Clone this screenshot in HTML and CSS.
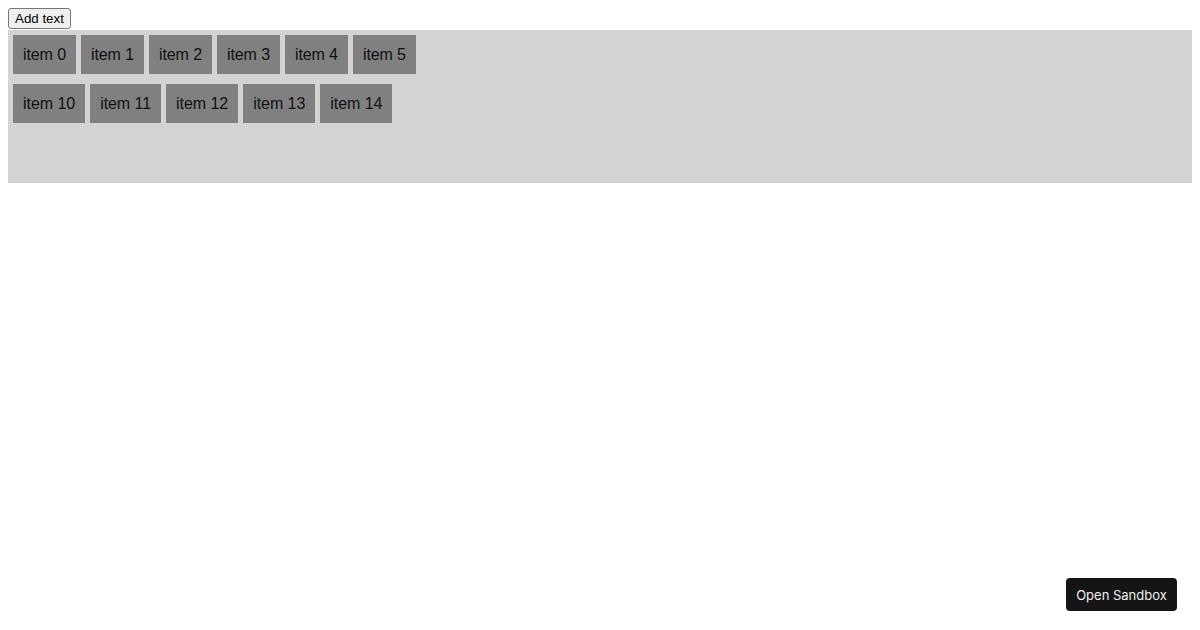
FILE: index.html
```html
<!DOCTYPE html>
<html>
<head>
<meta charset="utf-8">
<link rel="stylesheet" href="styles.css">
</head>
<body>
<button class="add-btn">Add text</button>
<div class="container">
  <div class="row">
    <div class="item">item 0</div>
    <div class="item">item 1</div>
    <div class="item">item 2</div>
    <div class="item">item 3</div>
    <div class="item">item 4</div>
    <div class="item">item 5</div>
  </div>
  <div class="row row-wide">
    <div class="item">item 10</div>
    <div class="item">item 11</div>
    <div class="item">item 12</div>
    <div class="item">item 13</div>
    <div class="item">item 14</div>
  </div>
</div>
<a class="sandbox-btn">Open Sandbox</a>
</body>
</html>
```
FILE: styles.css
```css
body {
  margin: 8px;
  font-family: "Liberation Sans", Arial, sans-serif;
}
.add-btn {
  display: block;
  font-family: "Liberation Sans", Arial, sans-serif;
  font-size: 13.33px;
  height: 21px;
  padding: 1px 6px;
  border: 1px solid #767676;
  border-radius: 3px;
  background: #efefef;
  color: #000;
  margin: 0;
}
.container {
  margin-top: 1px;
  background: #d3d3d3;
  height: 153px;
  box-sizing: border-box;
  padding: 5px;
  display: flex;
  flex-direction: column;
  gap: 10px;
}
.row {
  display: flex;
  gap: 5px;
}
.item {
  background: #808080;
  color: #111;
  font-size: 16px;
  line-height: 19px;
  letter-spacing: -0.1px;
  padding: 10px;
}
.row-wide .item {
  letter-spacing: -0.05px;
}
.sandbox-btn {
  position: fixed;
  right: 23px;
  bottom: 19px;
  width: 111px;
  height: 33px;
  box-sizing: border-box;
  display: flex;
  align-items: center;
  justify-content: center;
  background: #151515;
  color: #f0f0f0;
  border-radius: 4px;
  font-family: Inter, "Liberation Sans", sans-serif;
  font-size: 13px;
}
```
